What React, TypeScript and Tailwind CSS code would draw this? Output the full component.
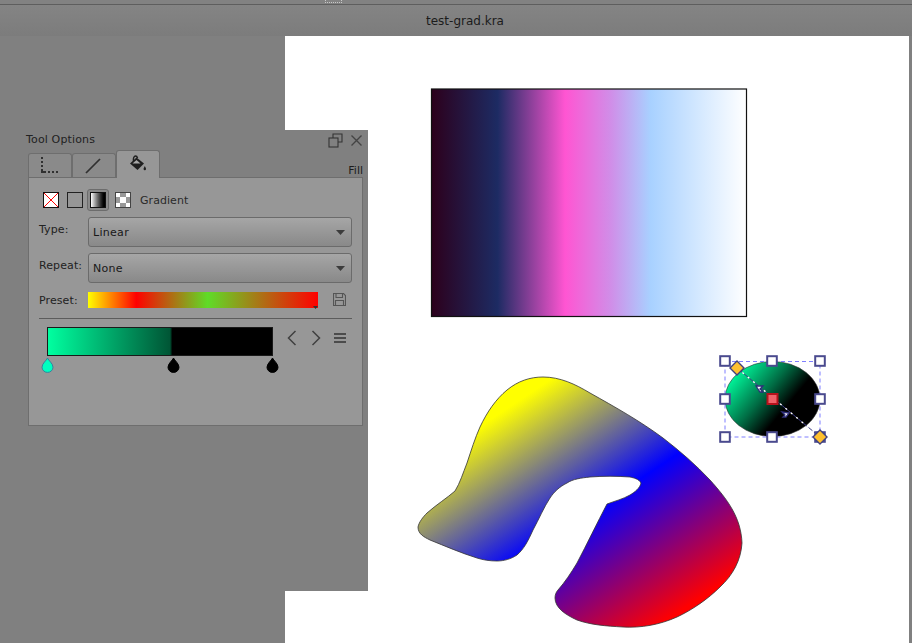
const SHAPE =
  'M543 377 C560 377 575 384 590 393 C615 407 640 421 663 438 C680 451 696 465 710 480 C727 499 741 517 742 543 C741 560 733 575 720 587 C708 599 692 610 677 617 C659 625 641 628 623 627 C606 626 591 625 577 620 C566 615 555 608 555 598 C555 595 556 592 558 590 C565 582 571 573 577 563 C587 544 597 523 607 504 C615 501 623 499 630 495 C635 492 640 488 641 483 C639 479 634 478 630 477 C617 476 603 476 590 477 C581 478 573 479 567 483 C559 487 554 492 550 498 C544 507 539 519 533 530 C528 541 524 549 517 555 C511 559 504 561 497 561 C490 561 483 560 477 558 C461 553 445 546 430 540 C424 537 418 534 418 527 C419 522 423 517 427 513 C436 505 447 498 455 491 C460 483 463 473 467 463 C471 451 475 438 480 427 C487 412 496 399 507 390 C518 381 530 377 543 377 Z';

const HANDLES = [
  [725, 361],
  [772, 361],
  [820, 361],
  [725, 399],
  [820, 399],
  [725, 437],
  [772, 437],
  [820, 437],
];

function CanvasArt() {
  return (
    <svg className="absolute left-0 top-0" width={912} height={643} viewBox="0 0 912 643">
      <defs>
        <linearGradient id="rectGrad" x1="0" y1="0" x2="1" y2="0">
          <stop offset="0" stopColor="#2c001c" />
          <stop offset="0.21" stopColor="#1d2b63" />
          <stop offset="0.424" stopColor="#ff55d2" />
          <stop offset="0.57" stopColor="#d08ee8" />
          <stop offset="0.696" stopColor="#a8d1ff" />
          <stop offset="1" stopColor="#ffffff" />
        </linearGradient>
        <linearGradient id="shapeGrad" gradientUnits="userSpaceOnUse" x1="517" y1="402" x2="664" y2="622">
          <stop offset="0" stopColor="#ffff00" />
          <stop offset="0.5" stopColor="#0000ff" />
          <stop offset="1" stopColor="#ff0000" />
        </linearGradient>
        <linearGradient id="ellipseGrad" gradientUnits="userSpaceOnUse" x1="737" y1="368" x2="820" y2="437">
          <stop offset="0" stopColor="#00ffa0" />
          <stop offset="0.35" stopColor="#006e45" />
          <stop offset="0.58" stopColor="#000000" />
          <stop offset="1" stopColor="#000000" />
        </linearGradient>
      </defs>

      <rect x="431.5" y="89" width="315" height="227.5" fill="url(#rectGrad)" stroke="#111" strokeWidth="1.2" />
      <path d={SHAPE} fill="url(#shapeGrad)" stroke="#333" strokeWidth="0.8" />
      <ellipse cx="772.5" cy="399" rx="47.5" ry="37.5" fill="url(#ellipseGrad)" stroke="#333" strokeWidth="0.6" />

      {/* selection decorations */}
      <rect x="725" y="361.5" width="95" height="75.5" fill="none" stroke="#7f7fff" strokeDasharray="4 3" />
      <line x1="737" y1="368" x2="820" y2="437" stroke="#3d3d85" />
      <line x1="737" y1="368" x2="820" y2="437" stroke="#fff" strokeWidth="1.4" strokeDasharray="2 5" />
      <path d="M756 386 L763 386 L760 389 L763 392 L760 392 Z" fill="#fff" stroke="#2e2e7a" strokeWidth="1.3" />
      <path d="M789 413 L782 412 L785 415 L783 417 L786 417 Z" fill="#fff" stroke="#2e2e7a" strokeWidth="1.3" />
      {HANDLES.map(([x, y]) => (
        <rect
          key={`${x}-${y}`}
          x={x - 4.8}
          y={y - 4.8}
          width="9.6"
          height="9.6"
          fill="#fff"
          stroke="#4a4a8e"
          strokeWidth="2"
        />
      ))}
      <rect x="767.5" y="394" width="10" height="10" fill="#f0626a" stroke="#b5121c" strokeWidth="2" />
      <path d="M737 361 L744 368 L737 375 L730 368 Z" fill="#ffc02e" stroke="#40407e" strokeWidth="1.4" />
      <path d="M820 430 L827 437 L820 444 L813 437 Z" fill="#ffc02e" stroke="#40407e" strokeWidth="1.4" />
    </svg>
  );
}

function Combo({ label, value }: { label: string; value: string }) {
  return (
    <div className="flex items-center">
      <span className="w-[49px] -mt-[3px] text-[11px] tracking-[0.1px] text-[#222]">{label}</span>
      <div className="flex h-[30px] w-[264px] items-center justify-between rounded-[3px] border border-[#6b6b6b] bg-gradient-to-b from-[#a6a6a6] to-[#898989] pl-[4px] pr-[6px] text-[11px] tracking-[0.3px] text-[#181818]">
        <span className="pt-[2px]">{value}</span>
        <svg width="9" height="5" viewBox="0 0 9 5">
          <path d="M0 0 H9 L4.5 5 Z" fill="#3c3c3c" />
        </svg>
      </div>
    </div>
  );
}

function Drop({ fill, stroke }: { fill: string; stroke: string }) {
  return (
    <svg width="13" height="16" viewBox="0 0 13 16">
      <path
        d="M6.5 1 C7.5 3.5 12 6.5 12 10.2 A5.5 5.2 0 0 1 1 10.2 C1 6.5 5.5 3.5 6.5 1 Z"
        fill={fill}
        stroke={stroke}
      />
    </svg>
  );
}

function ToolOptions() {
  return (
    <div className="absolute left-[26px] top-[130px] flex w-[338px] flex-col font-['DejaVu_Sans',sans-serif]">
      <div className="flex h-[21px] items-center justify-between pr-[1px]">
        <span className="text-[11px] tracking-[0.15px] text-[#222]">Tool Options</span>
        <div className="flex items-center gap-[7px]">
          <svg width="15" height="15" viewBox="0 0 15 15" fill="none" stroke="#333" strokeWidth="1.1">
            <path d="M5 5 V1 H14 V9 H10" />
            <rect x="1" y="5" width="9" height="9" />
          </svg>
          <svg width="13" height="13" viewBox="0 0 13 13" stroke="#444" strokeWidth="1.4">
            <path d="M1.5 1.5 L11.5 11.5 M11.5 1.5 L1.5 11.5" />
          </svg>
        </div>
      </div>

      <div className="flex h-[26px] items-end pl-[2px]">
        <div className="flex h-[24px] w-[44px] items-center justify-center rounded-t-[3px] border border-b-0 border-[#6e6e6e] bg-[#8a8a8a]">
          <svg className="-ml-[3px]" width="18" height="18" viewBox="0 0 18 18" fill="#303030">
            <rect x="1" y="0" width="2" height="2" />
            <rect x="1" y="4" width="2" height="2" />
            <rect x="1" y="8" width="2" height="2" />
            <rect x="1" y="12" width="2" height="4" />
            <rect x="3" y="14" width="3" height="2" />
            <rect x="8" y="14" width="2" height="2" />
            <rect x="12" y="14" width="2" height="2" />
            <rect x="16" y="14" width="2" height="2" />
          </svg>
        </div>
        <div className="flex h-[24px] w-[44px] items-center justify-center rounded-t-[3px] border border-b-0 border-[#6e6e6e] bg-[#8a8a8a]">
          <svg className="-ml-[3px]" width="16" height="16" viewBox="0 0 16 16" stroke="#303030" strokeWidth="1.7">
            <path d="M1 15 L15 1" />
          </svg>
        </div>
        <div className="relative z-10 -mb-[1px] flex h-[28px] w-[44px] items-center justify-center rounded-t-[3px] border border-b-0 border-[#6e6e6e] bg-[#979797] pb-[3px]">
          <svg width="18" height="17" viewBox="0 0 18 17">
            <path d="M7.5 2.5 L15 8.5 L8.5 15 L1 8.5 Z" fill="#1f1f1f" />
            <path d="M7.5 5 L11.5 8.5 L3.5 8.5 Z" fill="#a8a8a8" />
            <path d="M4.5 6 C4 3.5 5 1 6.5 1 C7.5 1 8.2 1.8 8.6 3" fill="none" stroke="#1f1f1f" strokeWidth="1.4" />
            <path d="M15.8 11 C16.5 12.5 17 13 17 14 A1.2 1.2 0 0 1 14.6 14 C14.6 13 15.2 12.5 15.8 11 Z" fill="#1f1f1f" />
          </svg>
        </div>
        <span className="ml-auto -mb-[2px] pr-[1px] text-[11px] text-[#1c1c1c]">Fill</span>
      </div>

      <div className="ml-[2px] flex h-[249px] w-[335px] flex-col border border-[#6e6e6e] bg-[#979797] px-[10px] pt-[11px]">
        <div className="flex h-[22px] items-center pl-[4px]">
          <svg width="16" height="16" viewBox="0 0 16 16">
            <rect x="0.5" y="0.5" width="15" height="15" fill="#fff" stroke="#111" />
            <path d="M1 1 L15 15 M15 1 L1 15" stroke="#f00" />
          </svg>
          <div className="ml-[8px] h-[16px] w-[16px] border border-[#222]" />
          <div className="ml-[4px] flex h-[22px] w-[22px] items-center justify-center rounded-[3px] border border-[#6c6c6c] bg-[#8a8a8a]">
            <div className="h-[16px] w-[16px] border border-[#111] bg-gradient-to-r from-white to-black" />
          </div>
          <svg className="ml-[6px]" width="16" height="16" viewBox="0 0 16 16">
            <rect width="16" height="16" fill="#fff" />
            <rect x="5" y="0" width="6" height="5" fill="#999" />
            <rect x="0" y="5" width="5" height="6" fill="#999" />
            <rect x="11" y="5" width="5" height="6" fill="#999" />
            <rect x="5" y="11" width="6" height="5" fill="#999" />
            <rect x="0.5" y="0.5" width="15" height="15" fill="none" stroke="#444" />
          </svg>
          <span className="ml-[9px] pt-[2px] text-[11px] tracking-[0.05px] text-[#2a2a2a]">Gradient</span>
        </div>

        <div className="mt-[6px] flex flex-col gap-[6px]">
          <Combo label="Type:" value="Linear" />
          <Combo label="Repeat:" value="None" />
        </div>

        <div className="mt-[9px] flex h-[16px] items-center">
          <span className="w-[49px] pt-[3px] text-[11px] tracking-[0.1px] text-[#222]">Preset:</span>
          <div className="relative h-[16px] w-[230px] bg-[linear-gradient(to_right,#ffff00_0%,#ff0000_21%,#5fdc28_52%,#ff0000_100%)]">
            <svg className="absolute -bottom-px right-0" width="5" height="3" viewBox="0 0 5 3">
              <path d="M0 0 H5 L2.5 3 Z" fill="#333" />
            </svg>
          </div>
          <svg className="ml-[15px] -mt-[2px]" width="13" height="13" viewBox="0 0 13 13" fill="none" stroke="#555" strokeWidth="1.1">
            <path d="M0.5 0.5 H10.5 L12.5 2.5 V12.5 H0.5 Z" />
            <path d="M3 0.5 V4.5 H9.5 V0.5" />
            <path d="M2.5 12.5 V7.5 H10.5 V12.5" />
          </svg>
        </div>

        <div className="mt-[10px] h-px w-[313px] bg-[#5c5c5c]" />

        <div className="mt-[8px] flex pl-[8px]">
          <div className="h-[29px] w-[226px] border border-[#1a1a1a] bg-[linear-gradient(to_right,#00ffa0_0%,#005535_54.5%,#000_55.5%,#000_100%)]" />
          <div className="ml-[13px] flex h-[22px] items-center">
            <svg width="12" height="16" viewBox="0 0 12 16" fill="none" stroke="#404040" strokeWidth="1.5">
              <path d="M9.5 1 L2.5 8 L9.5 15" />
            </svg>
            <svg className="ml-[12px]" width="12" height="16" viewBox="0 0 12 16" fill="none" stroke="#404040" strokeWidth="1.5">
              <path d="M2.5 1 L9.5 8 L2.5 15" />
            </svg>
            <svg className="ml-[12px]" width="12" height="12" viewBox="0 0 12 12" stroke="#333" strokeWidth="1.6">
              <path d="M0 2 H12 M0 6 H12 M0 10 H12" />
            </svg>
          </div>
        </div>
        <div className="mt-px flex h-[16px] pl-[1.5px]">
          <Drop fill="#00ffc0" stroke="#3a7f9c" />
          <div className="ml-[113px]">
            <Drop fill="#000" stroke="#000" />
          </div>
          <div className="ml-[86px]">
            <Drop fill="#000" stroke="#000" />
          </div>
        </div>
      </div>
    </div>
  );
}

export default function App() {
  return (
    <div className="relative flex h-[643px] w-[912px] flex-col overflow-hidden bg-[#808080]">
      <div className="relative flex h-[5px] shrink-0 justify-center border-b border-[#5e5e5e] bg-[#828282] pr-[245px]">
        <div className="h-[3px] w-[17px] border-x border-b border-dotted border-[#c8c8c8]" />
      </div>
      <div className="flex h-[31px] shrink-0 items-center justify-center bg-[linear-gradient(to_bottom,#848484,#7c7c7c)] pr-[15px] font-['DejaVu_Sans',sans-serif] text-[12px] text-[#1c1c1c]">
        <span className="pl-[33px]">test-grad.kra</span>
      </div>
      <div className="flex min-h-0 flex-1">
        <div className="w-[285px] shrink-0" />
        <div className="w-[624px] shrink-0 bg-white" />
      </div>
      {/* dock backdrop behind the floating panel */}
      <div className="absolute left-[285px] top-[130px] h-[461px] w-[83px] bg-[#808080]" />
      <CanvasArt />
      <ToolOptions />
    </div>
  );
}
